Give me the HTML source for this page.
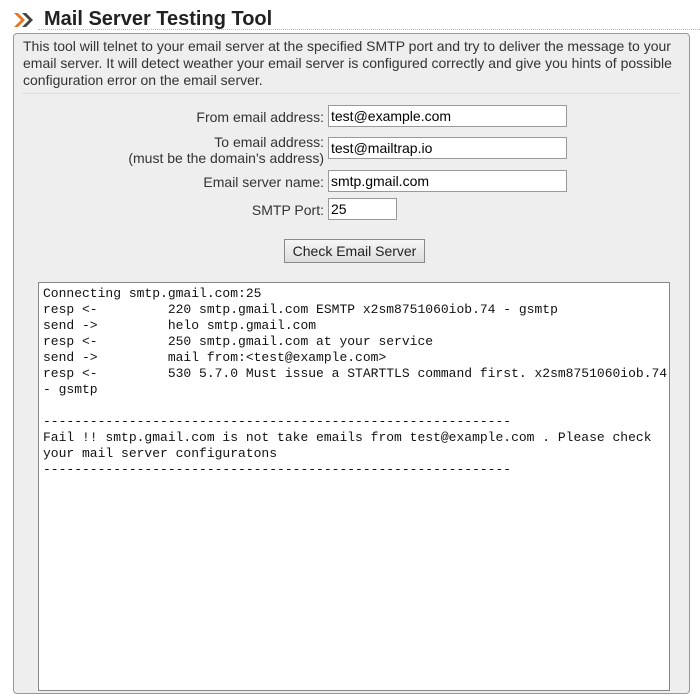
<!DOCTYPE html>
<html><head><meta charset="utf-8"><style>
body{margin:0;width:700px;height:700px;background:#fff;font-family:"Liberation Sans",sans-serif;overflow:hidden;position:relative}
.t{position:absolute;left:0;top:0;width:700px;height:32px}
.t h1{position:absolute;left:44px;top:7px;margin:0;font-size:20px;font-weight:bold;color:#222;line-height:24px}
.dots{position:absolute;left:38px;right:0;top:29px;border-top:1px dotted #bbb}
.panel{position:absolute;left:13px;top:33px;width:675px;height:659px;background:#eee;border:1px solid #999;border-radius:4px}
.intro{position:absolute;left:9px;top:4px;width:660px;font-size:14px;line-height:17px;color:#333}
.sep{position:absolute;left:8px;right:8px;top:59px;border-top:1px solid #ddd}
.lab{position:absolute;right:365px;text-align:right;font-size:14px;color:#333;line-height:16px}
.inp{position:absolute;left:314px;height:22px;background:#fff;border:1px solid #999;box-sizing:border-box;font-size:14px;line-height:20px;padding-left:2px;color:#000}
.btn{position:absolute;left:270px;top:205px;width:141px;height:24px;box-sizing:border-box;border:1px solid #888;background:linear-gradient(#f6f6f6,#ddd);font-size:14px;line-height:22px;text-align:center;color:#222}
.ta{position:absolute;left:24px;top:248px;width:632px;height:409px;background:#fff;border:1px solid #888;box-sizing:border-box;padding:3px 4px;overflow:hidden}
.ta pre{margin:0;font-family:"Liberation Mono",monospace;font-size:13px;line-height:16px;color:#111;white-space:pre}
</style></head><body>
<div class="t">
<svg style="position:absolute;left:13px;top:12px" width="22" height="16" viewBox="0 0 22 16"><path d="M1 1l7 7-7 7h4l7-7-7-7z" fill="#e8741e"/><path d="M9 1l7 7-7 7h4l7-7-7-7z" fill="#444"/></svg>
<h1>Mail Server Testing Tool</h1>
<div class="dots"></div>
</div>
<div class="panel">
<div class="intro">This tool will telnet to your email server at the specified SMTP port and try to deliver the message to your email server. It will detect weather your email server is configured correctly and give you hints of possible configuration error on the email server.</div>
<div class="sep"></div>
<div class="lab" style="top:75px">From email address:</div>
<div class="inp" style="top:71px;width:239px">test@example.com</div>
<div class="lab" style="top:100px">To email address:<br>(must be the domain's address)</div>
<div class="inp" style="top:103px;width:239px">test@mailtrap.io</div>
<div class="lab" style="top:140px">Email server name:</div>
<div class="inp" style="top:136px;width:239px">smtp.gmail.com</div>
<div class="lab" style="top:168px">SMTP Port:</div>
<div class="inp" style="top:164px;width:69px">25</div>
<div class="btn">Check Email Server</div>
<div class="ta"><pre>Connecting smtp.gmail.com:25
resp &lt;-         220 smtp.gmail.com ESMTP x2sm8751060iob.74 - gsmtp
send -&gt;         helo smtp.gmail.com
resp &lt;-         250 smtp.gmail.com at your service
send -&gt;         mail from:&lt;test@example.com&gt;
resp &lt;-         530 5.7.0 Must issue a STARTTLS command first. x2sm8751060iob.74
- gsmtp

------------------------------------------------------------
Fail !! smtp.gmail.com is not take emails from test@example.com . Please check
your mail server configuratons
------------------------------------------------------------</pre></div>
</div>
</body></html>
